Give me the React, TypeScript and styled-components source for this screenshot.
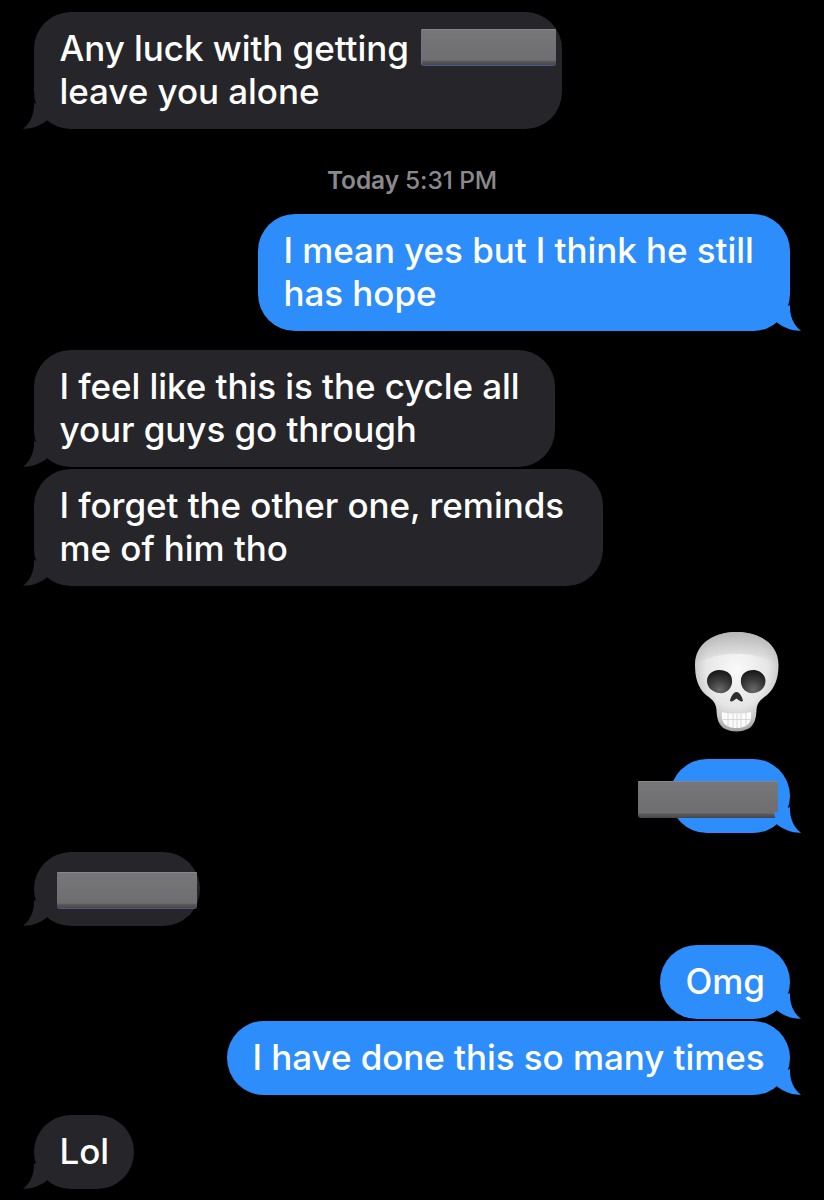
import styled, { createGlobalStyle } from "styled-components";

const GlobalStyle = createGlobalStyle`
  html, body {
    margin: 0;
    padding: 0;
    background: #000;
  }
`;

const Thread = styled.div`
  width: 824px;
  height: 1200px;
  overflow: hidden;
  box-sizing: border-box;
  padding: 12px 34px 0;
  display: flex;
  flex-direction: column;
  background: #000;
  font-family: Inter, "Liberation Sans", sans-serif;
`;

const Bubble = styled.div<{ $mine?: boolean; $width: number; $gap: number }>`
  position: relative;
  box-sizing: border-box;
  width: ${(p) => p.$width}px;
  margin-top: ${(p) => p.$gap}px;
  align-self: ${(p) => (p.$mine ? "flex-end" : "flex-start")};
  padding: 15px 26px 16px 25.5px;
  border-radius: 37px;
  background: ${(p) => (p.$mine ? "#2d8efb" : "#26262a")};
  color: #fff;
  font-size: 35px;
  font-weight: 450;
  line-height: 43px;
  letter-spacing: -0.06px;
  white-space: nowrap;
`;

const TailShape = styled.svg<{ $mine?: boolean }>`
  position: absolute;
  bottom: 0;
  width: 30px;
  height: 30px;
  ${(p) => (p.$mine ? "right: -14px;" : "left: -14px;")}
  ${(p) => (p.$mine ? "transform: scaleX(-1);" : "")}
`;

const Redaction = styled.span`
  position: absolute;
  box-sizing: border-box;
  background: linear-gradient(#777779, #6e6e70 86%, #58585a 90%, #47474b);
  border-top: 1px solid #87878b;
  border-radius: 1px 1px 3px 3px;
`;

const FirstRedaction = styled(Redaction)`
  left: 387px;
  top: 17px;
  width: 135px;
  height: 37px;
  border-left: 1px solid #6a7390;
  border-bottom: 1px solid #4a5a8c;
`;

const MineRedaction = styled(Redaction)`
  left: -32px;
  top: 22px;
  width: 140px;
  height: 37px;
`;

const TheirRedaction = styled(Redaction)`
  left: 23px;
  top: 20px;
  width: 140px;
  height: 37px;
  border-bottom: 1px solid #50587e;
`;

const Timestamp = styled.div`
  margin-top: 38px;
  margin-bottom: 21px;
  align-self: center;
  color: #8a8a8e;
  font-size: 24.5px;
  line-height: 26px;
  font-weight: 600;
  letter-spacing: -0.1px;
`;

const TimeValue = styled.span`
  font-weight: 500;
`;

const SkullWrap = styled.div`
  align-self: flex-end;
  margin-top: 46px;
  margin-right: 11px;
  width: 84px;
  height: 102px;
`;

const Tail = ({ mine }: { mine?: boolean }) => (
  <TailShape $mine={mine} viewBox="0 0 30 30">
    <path
      d="M14 4C14.5 14 11 24 3 29.7C11 30.2 20 27 27 21.5L30 10Z"
      fill={mine ? "#2d8efb" : "#26262a"}
    />
  </TailShape>
);

const Skull = () => (
  <svg viewBox="0 0 84 102" width="84" height="102">
    <defs>
      <radialGradient id="bone" cx="0.5" cy="0.38" r="0.62">
        <stop offset="0" stopColor="#fafafa" />
        <stop offset="0.6" stopColor="#e6e6e6" />
        <stop offset="0.85" stopColor="#c6c6c6" />
        <stop offset="1" stopColor="#a0a0a0" />
      </radialGradient>
      <linearGradient id="dome" x1="0" y1="0" x2="0" y2="1">
        <stop offset="0" stopColor="#adadad" stopOpacity="0.85" />
        <stop offset="1" stopColor="#b8b8b8" stopOpacity="0" />
      </linearGradient>
      <radialGradient id="socket" cx="0.5" cy="0.85" r="0.8">
        <stop offset="0" stopColor="#6a6a6a" />
        <stop offset="0.55" stopColor="#3a3a3a" />
        <stop offset="1" stopColor="#1a1a1a" />
      </radialGradient>
    </defs>
    <path
      d="M41.5 0C62 0 83.5 10 83.5 33C83.5 46 80 56 72 63C65 68 62 71 61.5 78C61 90 58 99 41.5 99.5C25 99 22 90 21.5 78C21 71 18 68 11 63C3 56 0 46 0 33C0 10 21 0 41.5 0Z"
      fill="url(#bone)"
    />
    <path d="M41.5 0C62 0 83.5 10 83.5 33C60 18 23 18 0 33C0 10 21 0 41.5 0Z" fill="url(#dome)" />
    <path d="M24 38C33 38 38 43 37 51C36 58 30 62 24 61C17 60 12 55 12 49C12 43 17 38 24 38Z" fill="url(#socket)" />
    <path d="M58.5 38C50 38 45 43 46 51C47 58 53 62 59 61C66 60 70.5 55 70.5 49C70.5 43 65 38 58.5 38Z" fill="url(#socket)" />
    <path d="M41.5 60C45 60 47.5 66 48 69C46 70.5 44 68 41.5 66.5C39 68 37 70.5 35 69C35.5 66 38 60 41.5 60Z" fill="#2e2e2e" />
    <path d="M27 80C35 82 48 82 56 80C57 89 54 96 41.5 96C29 96 26 89 27 80Z" fill="#fbfbfb" />
    <path d="M33 81V95M38 82V96M42 82V96M46 82V96M51 81V95M27.5 87.5H55.5" stroke="#cfcfcf" strokeWidth="0.8" fill="none" />
  </svg>
);

export default function App() {
  return (
    <>
      <GlobalStyle />
      <Thread>
        <Bubble $width={528} $gap={0}>
          Any luck with getting
          <br />
          leave you alone
          <FirstRedaction />
          <Tail />
        </Bubble>
        <Timestamp>
          Today <TimeValue>5:31 PM</TimeValue>
        </Timestamp>
        <Bubble $mine $width={532} $gap={0}>
          I mean yes but I think he still
          <br />
          has hope
          <Tail mine />
        </Bubble>
        <Bubble $width={521} $gap={19}>
          I feel like this is the cycle all
          <br />
          your guys go through
          <Tail />
        </Bubble>
        <Bubble $width={569} $gap={2}>
          I forget the other one, reminds
          <br />
          me of him tho
          <Tail />
        </Bubble>
        <SkullWrap>
          <Skull />
        </SkullWrap>
        <Bubble $mine $width={120} $gap={25}>
          &nbsp;
          <MineRedaction />
          <Tail mine />
        </Bubble>
        <Bubble $width={166} $gap={19}>
          &nbsp;
          <TheirRedaction />
          <Tail />
        </Bubble>
        <Bubble $mine $width={130} $gap={19}>
          Omg
          <Tail mine />
        </Bubble>
        <Bubble $mine $width={563} $gap={2}>
          I have done this so many times
          <Tail mine />
        </Bubble>
        <Bubble $width={100} $gap={20}>
          Lol
          <Tail />
        </Bubble>
      </Thread>
    </>
  );
}
